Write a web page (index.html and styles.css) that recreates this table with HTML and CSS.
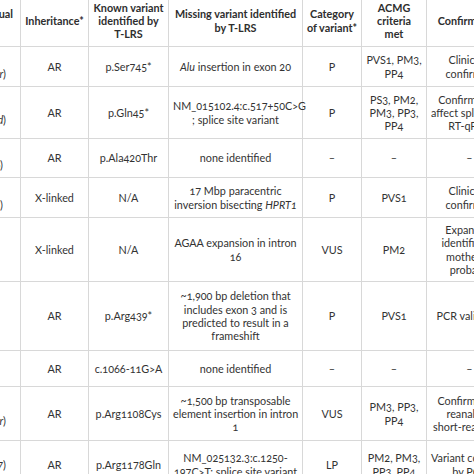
FILE: index.html
```html
<!DOCTYPE html>
<html>
<head>
<meta charset="utf-8">
<title>T-LRS variants</title>
<link rel="stylesheet" href="styles.css">
</head>
<body>
<table class="tbl">
  <colgroup>
    <col class="c-ind"><col class="c-inh"><col class="c-known"><col class="c-miss"><col class="c-cat"><col class="c-acmg"><col class="c-conf">
  </colgroup>
  <thead>
    <tr class="h52">
      <th class="ind">Individual<br><span class="hid">(gene)</span></th>
      <th>Inheritance*</th>
      <th>Known variant<br>identified by<br>T-LRS</th>
      <th>Missing variant identified<br>by T-LRS</th>
      <th>Category<br>of variant*</th>
      <th>ACMG<br>criteria<br>met</th>
      <th>Confirmation</th>
    </tr>
  </thead>
  <tbody>
    <tr class="h40">
      <td class="ind"><span class="hid">Individual 1</span><br>(<i>CEP290r</i>)</td>
      <td>AR</td>
      <td>p.Ser745*</td>
      <td><i>Alu</i> insertion in exon 20</td>
      <td>P</td>
      <td>PVS1, PM3,<br>PP4</td>
      <td>Clinically<br>confirmed</td>
    </tr>
    <tr class="h52">
      <td class="ind"><span class="hid">Individual 2</span><br>(<i>ATP8Bd</i>)</td>
      <td>AR</td>
      <td>p.Gln45*</td>
      <td>NM_015102.4:c.517+50C&gt;G<br>; splice site variant</td>
      <td>P</td>
      <td>PS3, PM2,<br>PM3, PP3,<br>PP4</td>
      <td>Confirmed to<br>affect splicing by<br>RT-qPCR</td>
    </tr>
    <tr class="h39">
      <td class="ind far"><span class="hid">Individual 3</span><br>(<i>PEX6</i>)</td>
      <td>AR</td>
      <td>p.Ala420Thr</td>
      <td>none identified</td>
      <td>–</td>
      <td>–</td>
      <td>–</td>
    </tr>
    <tr class="h40">
      <td class="ind far"><span class="hid">Individual 4</span><br>(<i>HPRT1</i>)</td>
      <td>X-linked</td>
      <td>N/A</td>
      <td>17 Mbp paracentric<br>inversion bisecting <i>HPRT1</i></td>
      <td>P</td>
      <td>PVS1</td>
      <td>Clinically<br>confirmed</td>
    </tr>
    <tr class="h64">
      <td class="ind"><span class="hid">Individual 5</span><br><span class="hid">(<i>DMD</i>)</span></td>
      <td>X-linked</td>
      <td>N/A</td>
      <td>AGAA expansion in intron<br>16</td>
      <td>VUS</td>
      <td>PM2</td>
      <td>Expansion<br>identified in<br>mother of<br>proband</td>
    </tr>
    <tr class="h69">
      <td class="ind"><span class="hid">Individual 6</span><br><span class="hid">(<i>NPHP4</i>)</span></td>
      <td>AR</td>
      <td>p.Arg439*</td>
      <td>~1,900 bp deletion that<br>includes exon 3 and is<br>predicted to result in a<br>frameshift</td>
      <td>P</td>
      <td>PVS1</td>
      <td>PCR validated</td>
    </tr>
    <tr class="h36">
      <td class="ind"><span class="hid">Individual 7</span><br><span class="hid">(<i>ABCA4</i>)</span></td>
      <td>AR</td>
      <td>c.1066-11G&gt;A</td>
      <td>none identified</td>
      <td>–</td>
      <td>–</td>
      <td>–</td>
    </tr>
    <tr class="h54">
      <td class="ind"><span class="hid">Individual 8</span><br>(<i>EYSr</i>)</td>
      <td>AR</td>
      <td>p.Arg1108Cys</td>
      <td>~1,500 bp transposable<br>element insertion in intron<br>1</td>
      <td>VUS</td>
      <td>PM3, PP3,<br>PP4</td>
      <td>Confirmed by<br>reanalysis<br>short-read data</td>
    </tr>
    <tr class="h48">
      <td class="ind">9 (<i>CC2D2A7</i>)</td>
      <td>AR</td>
      <td>p.Arg1178Gln</td>
      <td>NM_025132.3:c.1250-<br>197C&gt;T; splice site variant</td>
      <td>LP</td>
      <td>PM2, PM3,<br>PP3, PP4</td>
      <td>Variant confirmed<br>by PCR</td>
    </tr>
  </tbody>
</table>
</body>
</html>
```

FILE: styles.css
```css
html, body {
  margin: 0;
  padding: 0;
  background: #ffffff;
  overflow: hidden;
}

body {
  font-family: Lato, "Open Sans", "Liberation Sans", sans-serif;
  font-size: 10.8px;
  line-height: 13.3px;
  color: #333333;
}

.tbl {
  border-collapse: collapse;
  table-layout: fixed;
  width: 652px;
  margin: -6px 0 0 -140px;
  font-variant-numeric: oldstyle-nums;
}

.c-ind { width: 160px; }
.c-inh { width: 68px; }
.c-known { width: 80px; }
.c-miss { width: 134px; }
.c-cat { width: 59px; }
.c-acmg { width: 65px; }
.c-conf { width: 86px; }

th, td {
  border: 1px solid #d8d8d8;
  padding: 0 4px;
  text-align: center;
  vertical-align: middle;
  white-space: nowrap;
}

th {
  font-weight: 700;
  color: #2e2e2e;
}

.ind {
  text-align: right;
  padding-right: 14px;
  padding-left: 0;
}

.ind.far {
  padding-right: 17px;
}

th.ind {
  padding-right: 7px;
}

.hid {
  display: inline-block;
  margin-right: 44px;
}

.h36 { height: 36px; }
.h39 { height: 39px; }
.h40 { height: 40px; }
.h48 { height: 48px; }
.h52 { height: 52px; }
.h54 { height: 54px; }
.h64 { height: 64px; }
.h69 { height: 69px; }
```
